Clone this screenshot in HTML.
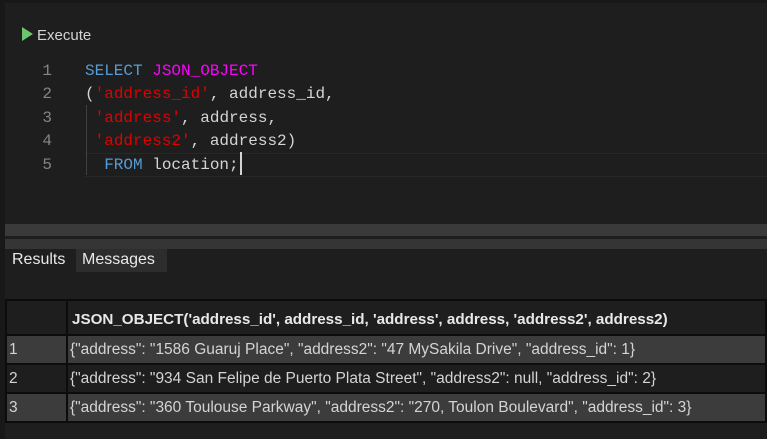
<!DOCTYPE html>
<html><head><style>
body{margin:0;width:767px;height:439px;background:#1e1e1e;overflow:hidden;position:relative;font-family:"Liberation Sans",sans-serif;}
.left{position:absolute;left:0;top:0;width:5px;height:439px;background:#181818}
.top{position:absolute;left:0;top:0;width:767px;height:3px;background:#181818}
.exec{position:absolute;left:22px;top:27px;color:#d4d4d4;font-size:15px}
.exec svg{vertical-align:-1px;margin-right:4px}
.code{position:absolute;left:0;top:59px;font-family:"Liberation Mono",monospace;font-size:16px;color:#d4d4d4}
.ln{position:absolute;left:0;width:52px;text-align:right;color:#858585}
.tx{position:absolute;left:85px;white-space:pre}
.k{color:#569cd6}.f{color:#ff00ff}.s{color:#e00000}
.guide{position:absolute;left:86px;top:105px;width:1px;height:70px;background:#404040}
.cur{position:absolute;left:85px;top:153px;width:682px;height:22px;border-top:1px solid #282828;border-bottom:1px solid #282828}
.caret{position:absolute;left:240px;top:152px;width:2px;height:23px;background:#d4d4d4}
.sb1{position:absolute;left:5px;top:224px;width:762px;height:12px;background:#3a3a3a}
.sb2{position:absolute;left:5px;top:239px;width:762px;height:10px;background:#353535}
.tab{position:absolute;top:249px;height:23px;line-height:21px;font-size:16px;color:#e8e8e8}
table{position:absolute;left:5px;top:299px;width:762px;border-collapse:collapse;font-size:15.5px;color:#d4d4d4}
td{border:2px solid #0c0c0c;padding:0 2px;height:27px;white-space:nowrap}
th{border:2px solid #0c0c0c;height:29px;text-align:left;padding:0 4px;font-weight:bold;color:#e8e8e8;font-size:15.2px;padding-top:4px;white-space:nowrap}
tr.g td{background:#3c3c3c}
</style></head><body>
<div class="top"></div><div class="left"></div>
<div class="exec"><svg width="11" height="14"><polygon points="0,0 11,7 0,14" fill="#6cc56c"/></svg>Execute</div>
<div class="cur"></div>
<div class="guide"></div>
<div class="code">
<div class="ln" style="top:3px">1</div><div class="tx" style="top:3px"><span class="k">SELECT</span> <span class="f">JSON_OBJECT</span></div>
<div class="ln" style="top:26px">2</div><div class="tx" style="top:26px">(<span class="s">'address_id'</span>, address_id,</div>
<div class="ln" style="top:50px">3</div><div class="tx" style="top:50px"> <span class="s">'address'</span>, address,</div>
<div class="ln" style="top:73px">4</div><div class="tx" style="top:73px"> <span class="s">'address2'</span>, address2)</div>
<div class="ln" style="top:97px">5</div><div class="tx" style="top:97px">  <span class="k">FROM</span> location;</div>
</div>
<div class="caret"></div>
<div class="sb1"></div><div class="sb2"></div>
<div class="tab" style="left:8px;width:66px;padding-left:4px">Results</div>
<div class="tab" style="left:76px;width:91px;background:#2d2d2d;padding-left:6px;box-sizing:border-box">Messages</div>
<table>
<tr><th style="width:59px;padding:0"></th><th>JSON_OBJECT('address_id', address_id, 'address', address, 'address2', address2)</th></tr>
<tr class="g"><td>1</td><td>{"address": "1586 Guaruj Place", "address2": "47 MySakila Drive", "address_id": 1}</td></tr>
<tr><td>2</td><td>{"address": "934 San Felipe de Puerto Plata Street", "address2": null, "address_id": 2}</td></tr>
<tr class="g"><td>3</td><td>{"address": "360 Toulouse Parkway", "address2": "270, Toulon Boulevard", "address_id": 3}</td></tr>
</table>
</body></html>
